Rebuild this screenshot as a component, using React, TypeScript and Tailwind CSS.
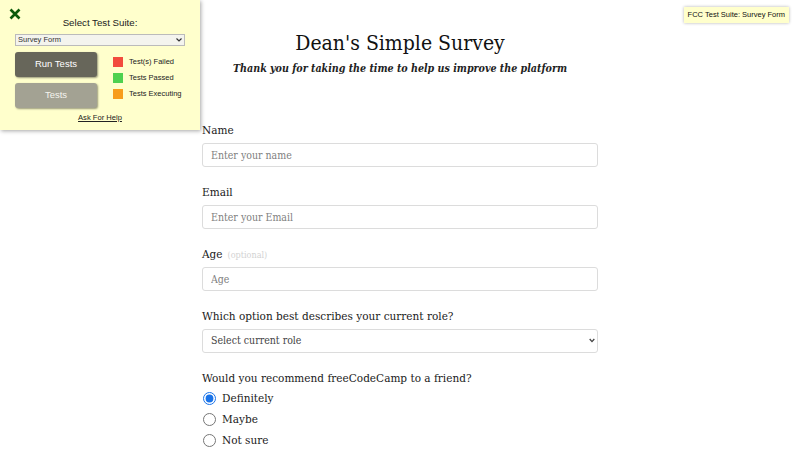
import React from "react";

const serif = "font-['DejaVu_Serif',serif] [font-stretch:condensed]";
const arial = "font-['Liberation_Sans',Arial,sans-serif] [font-stretch:normal]";

const inputClass =
  "block h-6 w-full rounded-[3px] border border-[#dcdcdc] bg-white px-2 text-[10.5px] text-[#333] outline-none placeholder:text-[#808080]";

function Legend({ color, label }: { color: string; label: string }) {
  return (
    <div className="flex h-[10px] items-center gap-[6px]">
      <span className={`h-[10px] w-[10px] ${color}`} />
      <span className="text-[7.5px] text-[#222]">{label}</span>
    </div>
  );
}

function TestPanel() {
  return (
    <div
      className={`absolute left-0 top-0 h-[130px] w-[200px] bg-[#ffffcc] shadow-[1px_1px_4px_rgba(0,0,0,0.35)] ${arial}`}
    >
      <svg className="absolute left-[9px] top-[8px]" width="12" height="12" viewBox="0 0 12 12">
        <path d="M1.5 1.5 L10.5 10.5 M10.5 1.5 L1.5 10.5" stroke="#0a5a0a" strokeWidth="2.6" />
      </svg>
      <div className="pt-[16px] text-center text-[9.7px] leading-[14px] text-[#222]">Select Test Suite:</div>
      <div className="mx-[15px] mt-[4px] flex h-[12px] items-center justify-between border border-[#bbb] bg-[#f4f4ee] px-[2px] text-[7.5px] text-[#333]">
        <span>Survey Form</span>
        <svg width="6" height="4" viewBox="0 0 6 4">
          <path d="M0.5 0.5 L3 3 L5.5 0.5" stroke="#333" strokeWidth="1.2" fill="none" />
        </svg>
      </div>
      <div className="mt-[6px] flex gap-4 pl-[15px]">
        <div className="flex flex-col gap-[6px]">
          <div className="flex h-[25px] w-[82px] items-center justify-center rounded-[3px] bg-[#67665a] text-[9.5px] text-white shadow-[1px_1px_2px_rgba(0,0,0,0.4)]">
            Run Tests
          </div>
          <div className="flex h-[25px] w-[82px] items-center justify-center rounded-[3px] bg-[#a3a293] text-[9.5px] text-[#f4f4ee] shadow-[1px_1px_2px_rgba(0,0,0,0.4)]">
            Tests
          </div>
        </div>
        <div className="flex flex-col gap-[6px] pt-[5px]">
          <Legend color="bg-[#f24c3d]" label="Test(s) Failed" />
          <Legend color="bg-[#4fd14f]" label="Tests Passed" />
          <Legend color="bg-[#f79d1c]" label="Tests Executing" />
        </div>
      </div>
      <div className="mt-[4px] text-center text-[7.6px] leading-[12px] text-[#222] underline">Ask For Help</div>
    </div>
  );
}

function Field({ label, children, note }: { label: string; note?: string; children: React.ReactNode }) {
  return (
    <div className="mb-[16px] flex flex-col">
      <label className="mb-[4px] h-[18px] text-[11.7px] leading-[18px] text-[#1a1a1a]">
        {label}
        {note && <span className="ml-[5px] text-[9px] text-[#d2d2d2]">{note}</span>}
      </label>
      {children}
    </div>
  );
}

export default function App() {
  return (
    <div className={`relative h-[450px] w-[800px] overflow-hidden bg-white ${serif}`}>
      <TestPanel />
      <div
        className={`absolute right-[11px] top-[7px] bg-[#ffffcc] px-[4px] py-[3px] text-[7.5px] leading-[10px] text-[#111] shadow-[0_0_3px_rgba(0,0,0,0.3)] ${arial}`}
      >
        FCC Test Suite: Survey Form
      </div>

      <div className="mx-auto w-[396px] pt-[28px]">
        <h1 className="text-center text-[21px] leading-[30px] text-[#111]">Dean's Simple Survey</h1>
        <p className="mt-[2px] whitespace-nowrap text-center text-[10.6px] leading-[16px] font-bold italic text-[#222]">
          Thank you for taking the time to help us improve the platform
        </p>

        <form className="mt-[45px]">
          <Field label="Name">
            <input className={inputClass} placeholder="Enter your name" />
          </Field>
          <Field label="Email">
            <input className={inputClass} placeholder="Enter your Email" />
          </Field>
          <Field label="Age" note="(optional)">
            <input className={inputClass} placeholder="Age" />
          </Field>
          <Field label="Which option best describes your current role?">
            <div className="relative">
              <select className={`${inputClass} appearance-none text-[#444]`} defaultValue="">
                <option value="" disabled>
                  Select current role
                </option>
                <option>Student</option>
                <option>Full time job</option>
                <option>Other</option>
              </select>
              <svg className="pointer-events-none absolute right-[3px] top-[9px]" width="6" height="5" viewBox="0 0 6 5">
                <path d="M0.7 1 L3 3.6 L5.3 1" stroke="#444" strokeWidth="1.3" fill="none" />
              </svg>
            </div>
          </Field>
          <div className="flex flex-col">
            <div className="mb-[1px] h-[18px] text-[11.7px] leading-[18px] text-[#1a1a1a]">
              Would you recommend freeCodeCamp to a friend?
            </div>
            {["Definitely", "Maybe", "Not sure"].map((o, i) => (
              <label key={o} className="flex h-[21px] items-center gap-[6px] text-[11.7px] text-[#1a1a1a]">
                <input
                  type="radio"
                  name="rec"
                  defaultChecked={i === 0}
                  className="ml-[1px] h-[13px] w-[13px] accent-[#1a73e8]"
                />
                {o}
              </label>
            ))}
          </div>
        </form>
      </div>
    </div>
  );
}
